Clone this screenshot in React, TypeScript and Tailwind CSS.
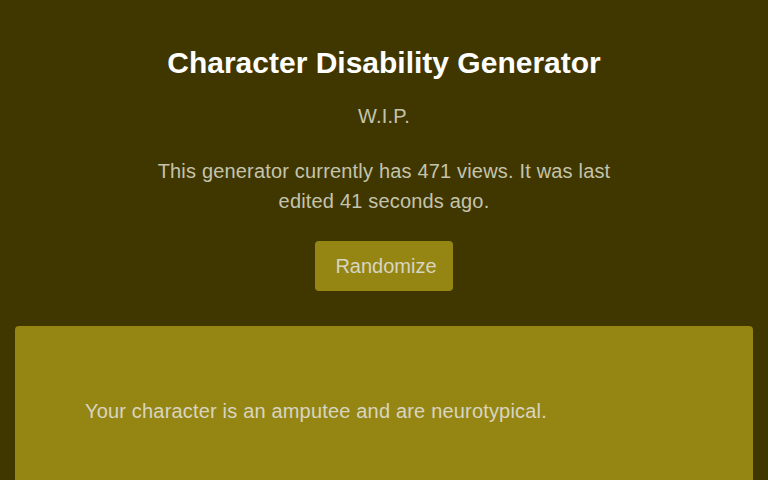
import React from "react";

export default function App() {
  return (
    <div className="min-h-[480px] w-full bg-[#403700] font-['Liberation_Sans',Arial,sans-serif] overflow-hidden">
      <div className="flex flex-col items-center pt-[45px]">
        <h1 className="text-[30px] leading-[36px] font-bold text-white">Character Disability Generator</h1>
        <p className="mt-[20px] text-[20px] leading-[30px] tracking-[0.18px] text-[#c4c4ae]">W.I.P.</p>
        <p className="mt-[25px] w-[480px] text-center text-[20px] leading-[30px] tracking-[0.18px] text-[#c4c4ae]">
          This generator currently has 471 views. It was last edited 41 seconds ago.
        </p>
        <button className="mt-[25px] h-[50px] w-[138px] rounded-[4px] bg-[#958614] pl-[4px] text-[20px] text-[#d8d5c0]">
          Randomize
        </button>
      </div>
      <div className="mx-[15px] mt-[35px] rounded-t-[4px] bg-[#958614] px-[70px] pt-[70px] pb-[70px]">
        <p className="text-[20px] leading-[30px] tracking-[0.18px] text-[#d8d5c0]">Your character is an amputee and are neurotypical.</p>
      </div>
    </div>
  );
}
